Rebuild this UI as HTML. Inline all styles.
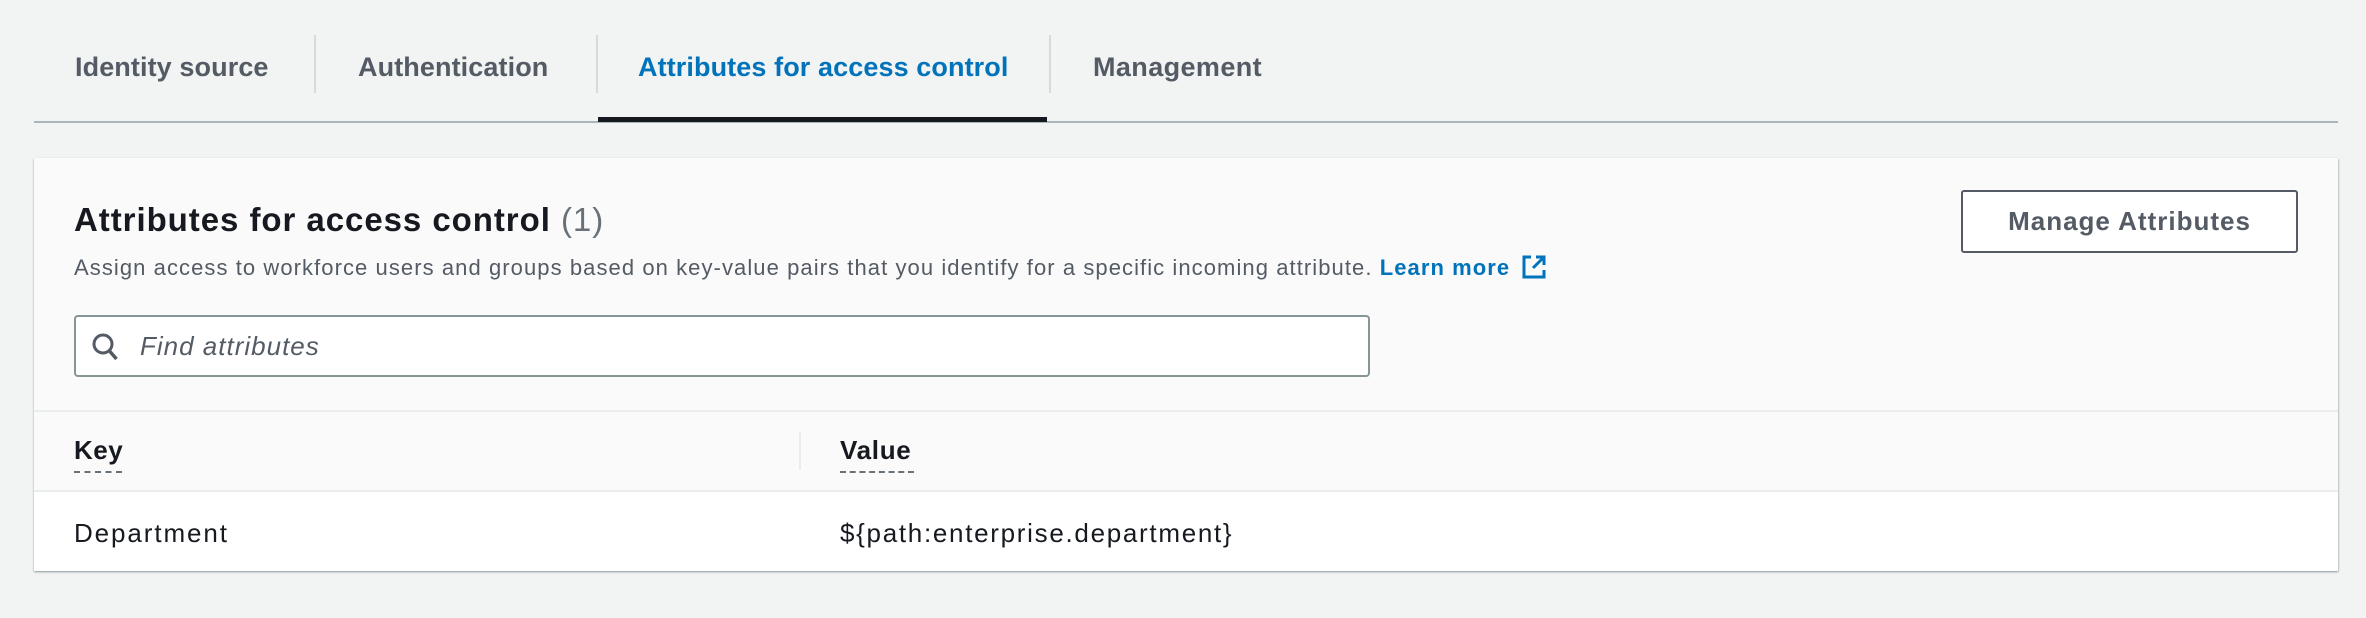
<!DOCTYPE html>
<html><head><meta charset="utf-8"><style>
*{margin:0;padding:0;box-sizing:border-box}
body{width:2366px;height:618px;background:#f2f3f3;font-family:"Liberation Sans",sans-serif;position:relative;overflow:hidden;color:#16191f}
.a{position:absolute;white-space:nowrap}
.tab{font-size:27px;letter-spacing:0.1px;font-weight:bold;color:#545b64;top:52px}
.sep{position:absolute;top:35px;width:2px;height:58px;background:#d5dbdb}
</style></head><body>
<div class="a tab" style="left:75px">Identity source</div>
<div class="sep" style="left:314px"></div>
<div class="a tab" style="left:358px">Authentication</div>
<div class="sep" style="left:596px"></div>
<div class="a tab" style="left:638px;color:#0073bb">Attributes for access control</div>
<div class="sep" style="left:1049px"></div>
<div class="a tab" style="left:1093px;letter-spacing:0.4px">Management</div>
<div class="a" style="left:34px;top:121px;width:2304px;height:2px;background:#aab7b8"></div>
<div class="a" style="left:598px;top:117px;width:449px;height:5px;background:#16191f"></div>

<div class="a" style="left:34px;top:158px;width:2304px;height:413px;background:#fafafa;box-shadow:0 1px 2px rgba(0,28,36,.35),1px 1px 1px rgba(0,28,36,.1)"></div>
<div class="a" style="left:74px;top:201px;font-size:33px;letter-spacing:0.95px;font-weight:bold">Attributes for access control <span style="font-weight:normal;color:#687078">(1)</span></div>
<div class="a" style="left:74px;top:254px;font-size:22px;letter-spacing:1.07px;color:#545b64">Assign access to workforce users and groups based on key-value pairs that you identify for a specific incoming attribute. <b style="color:#0073bb">Learn more</b>
<svg width="26" height="26" viewBox="0 0 26 26" style="vertical-align:-5px;margin-left:4px"><path d="M10 3H3v20h20v-7" fill="none" stroke="#0073bb" stroke-width="3"/><path d="M15 3h8v8M23 3L12 14" fill="none" stroke="#0073bb" stroke-width="3"/></svg></div>
<div class="a" style="left:1961px;top:190px;width:337px;height:63px;border:2px solid #545b64;border-radius:3px;background:#fff;font-size:26px;letter-spacing:1px;font-weight:bold;color:#545b64;text-align:center;line-height:59px">Manage Attributes</div>
<div class="a" style="left:74px;top:315px;width:1296px;height:62px;border:2px solid #879596;border-radius:4px;background:#fff"></div>
<svg class="a" style="left:90px;top:331px" width="30" height="32" viewBox="0 0 30 32"><circle cx="13" cy="13" r="9" fill="none" stroke="#545b64" stroke-width="3"/><path d="M19.5 20l7 8" stroke="#545b64" stroke-width="3.5"/></svg>
<div class="a" style="left:140px;top:331px;font-size:26px;letter-spacing:1px;font-style:italic;color:#545b64">Find attributes</div>
<div class="a" style="left:34px;top:410px;width:2304px;height:2px;background:#eaeded"></div>
<div class="a" style="left:74px;top:435px;font-size:26px;letter-spacing:0.5px;font-weight:bold">Key</div>
<div class="a" style="left:74px;top:471px;width:48px;border-top:2px dashed #687078"></div>
<div class="a" style="left:799px;top:432px;width:2px;height:38px;background:#eaeded"></div>
<div class="a" style="left:840px;top:435px;font-size:26px;letter-spacing:0.7px;font-weight:bold">Value</div>
<div class="a" style="left:840px;top:471px;width:74px;border-top:2px dashed #687078"></div>
<div class="a" style="left:34px;top:490px;width:2304px;height:81px;background:#fff;border-top:2px solid #eaeded"></div>
<div class="a" style="left:74px;top:518px;font-size:26px;letter-spacing:1.9px">Department</div>
<div class="a" style="left:840px;top:518px;font-size:26px;letter-spacing:1.7px">${path:enterprise.department}</div>
</body></html>
